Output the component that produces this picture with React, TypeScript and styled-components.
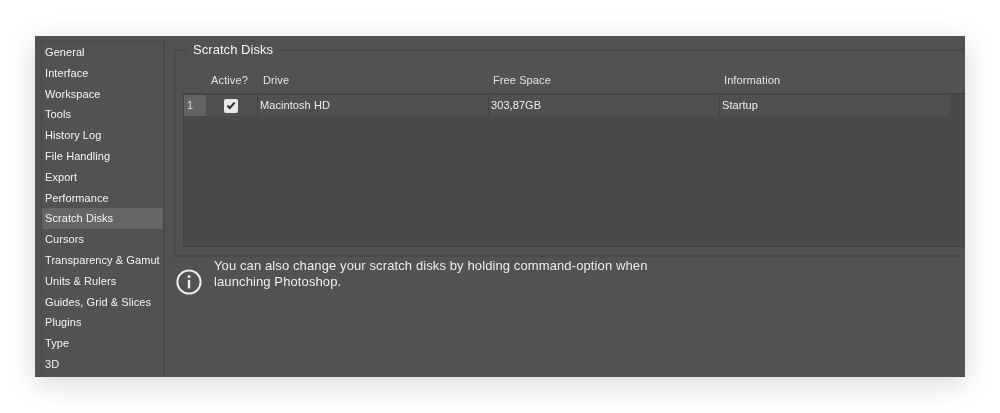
import React from "react";
import styled, { createGlobalStyle } from "styled-components";

const Global = createGlobalStyle`
  html, body { margin: 0; padding: 0; background: #fff; }
  body { font-family: "Liberation Sans", Arial, sans-serif; }
`;

const Page = styled.div`
  width: 1000px;
  height: 413px;
  padding: 36px 35px;
  box-sizing: border-box;
  overflow: hidden;
`;

const Window = styled.div`
  width: 930px;
  height: 341px;
  display: flex;
  background: #525252;
  color: #ececec;
  overflow: hidden;
  box-shadow: 0 6px 28px rgba(0, 0, 0, 0.16);
  box-sizing: border-box;
`;

const Sidebar = styled.nav`
  width: 121px;
  margin: 5px 0 0 6px;
  flex: none;
  border-left: 1px solid #484848;
  border-right: 2px solid #484848;
  border-top: 1px solid #484848;
  display: flex;
  flex-direction: column;
  filter: blur(0.3px);
`;

const SideItem = styled.div<{ $active?: boolean }>`
  height: 20.8px;
  line-height: 20.8px;
  padding-left: 3px;
  font-size: 11px;
  letter-spacing: 0.07px;
  white-space: nowrap;
  background: ${(p) => (p.$active ? "#656565" : "transparent")};
  color: #f4f4f4;
`;

const Main = styled.main`
  flex: 1;
  min-width: 0;
  padding: 6px 0 0 9px;
  display: flex;
  flex-direction: column;
  filter: blur(0.3px);
`;

const Group = styled.fieldset`
  margin: 0 -20px 0 0;
  padding: 0 0 9px 7px;
  height: 215px;
  box-sizing: border-box;
  border: 2px solid #4a4a4a;
  min-width: 0;
`;

const Legend = styled.legend`
  margin-left: 4px;
  padding: 0 5px 0 6px;
  font-size: 13px;
  line-height: 15px;
  letter-spacing: 0.05px;
  color: #f4f4f4;
`;

const HeadRow = styled.div`
  display: grid;
  grid-template-columns: 23px 51px 231px 231px 231px;
  height: 36px;
  padding-top: 9px;
  box-sizing: border-box;
  align-items: center;
  font-size: 11px;
  letter-spacing: 0.1px;
  color: #e4e4e4;
`;

const HeadCell = styled.div<{ $center?: boolean; $pad?: number }>`
  text-align: ${(p) => (p.$center ? "center" : "left")};
  padding-left: ${(p) => p.$pad ?? 0}px;
  padding-right: ${(p) => (p.$center ? 4 : 0)}px;
  white-space: nowrap;
`;

const Table = styled.div`
  height: 154px;
  background: #4a4a4a;
  border: 1px solid #434343;
  border-right: none;
  border-top: 2px solid #434343;
  box-sizing: border-box;
`;

const Row = styled.div`
  display: grid;
  grid-template-columns: 22px 51px 231px 231px 231px;
  height: 21px;
  background: #505050;
  width: 766px;
  font-size: 11px;
  letter-spacing: 0.07px;
  color: #ececec;
`;

const IndexCell = styled.div`
  background: #636363;
  line-height: 21px;
  padding-left: 3px;
  color: #dcdcdc;
`;

const Cell = styled.div`
  border-left: 1px solid #434343;
  line-height: 21px;
  padding-left: 2px;
  white-space: nowrap;
`;

const CheckCell = styled.div`
  display: flex;
  align-items: center;
  justify-content: center;
  padding-right: 1px;
`;

const CheckBox = styled.span`
  width: 14px;
  height: 14px;
  border-radius: 2px;
  background: #e8e8e8;
  display: flex;
  align-items: center;
  justify-content: center;
`;

const Note = styled.div`
  display: flex;
  align-items: flex-start;
  padding: 1px 0 0 2px;
`;

const InfoIcon = styled.svg`
  width: 26px;
  height: 26px;
  flex: none;
  margin: 11px 12px 0 0;
`;

const NoteText = styled.p`
  margin: 0;
  width: 470px;
  font-size: 13px;
  line-height: 15.5px;
  letter-spacing: 0.11px;
  color: #ececec;
`;

const items = [
  "General", "Interface", "Workspace", "Tools", "History Log", "File Handling", "Export",
  "Performance", "Scratch Disks", "Cursors", "Transparency & Gamut", "Units & Rulers",
  "Guides, Grid & Slices", "Plugins", "Type", "3D",
];

export default function App() {
  return (
    <Page>
      <Global />
      <Window>
        <Sidebar>
          {items.map((t) => (
            <SideItem key={t} $active={t === "Scratch Disks"}>{t}</SideItem>
          ))}
        </Sidebar>
        <Main>
          <Group>
            <Legend>Scratch Disks</Legend>
            <HeadRow>
              <HeadCell />
              <HeadCell $center>Active?</HeadCell>
              <HeadCell $pad={6}>Drive</HeadCell>
              <HeadCell $pad={5}>Free Space</HeadCell>
              <HeadCell $pad={5}>Information</HeadCell>
            </HeadRow>
            <Table>
              <Row>
                <IndexCell>1</IndexCell>
                <CheckCell>
                  <CheckBox>
                    <svg width="10" height="9" viewBox="0 0 10 9">
                      <path d="M1.3 4.6 L3.8 7 L8.6 1.6" fill="none" stroke="#2a2a2a" strokeWidth="2" />
                    </svg>
                  </CheckBox>
                </CheckCell>
                <Cell>Macintosh HD</Cell>
                <Cell>303,87GB</Cell>
                <Cell>Startup</Cell>
              </Row>
            </Table>
          </Group>
          <Note>
            <InfoIcon viewBox="0 0 26 26">
              <circle cx="13" cy="13" r="11.6" fill="none" stroke="#ececec" strokeWidth="2" />
              <circle cx="13" cy="7.6" r="1.5" fill="#ececec" />
              <rect x="11.8" y="10.8" width="2.4" height="8.6" fill="#ececec" />
            </InfoIcon>
            <NoteText>
              You can also change your scratch disks by holding command-option when launching Photoshop.
            </NoteText>
          </Note>
        </Main>
      </Window>
    </Page>
  );
}
